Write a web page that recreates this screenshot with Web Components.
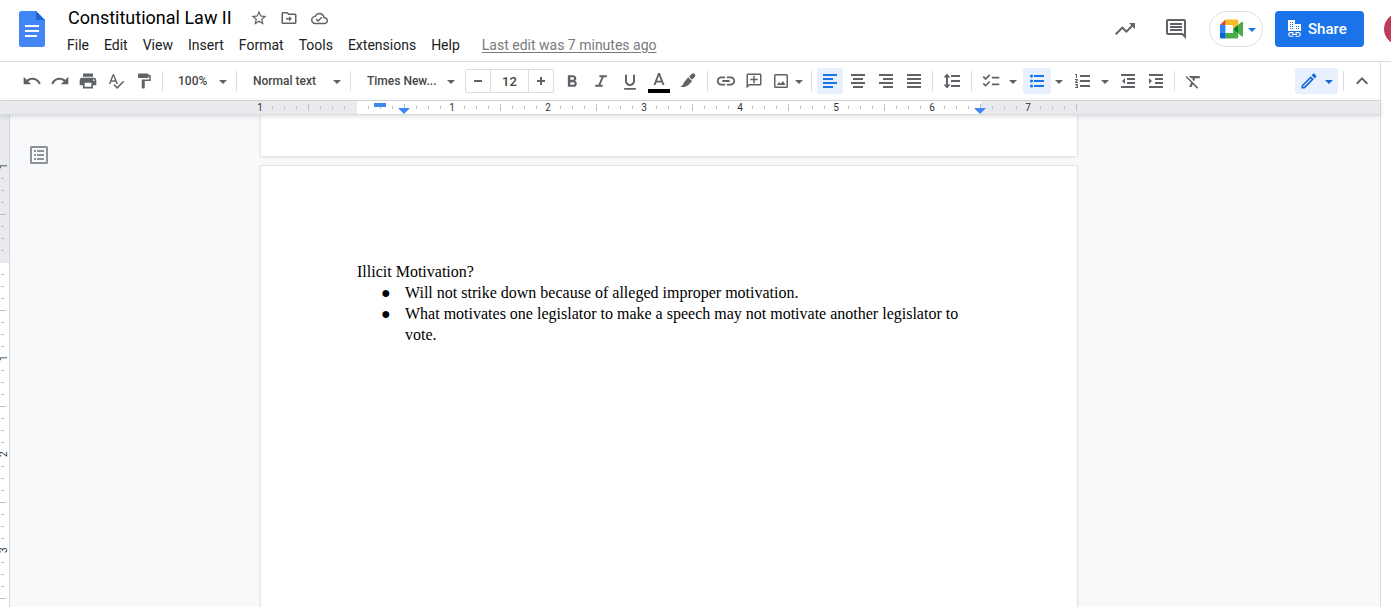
<!DOCTYPE html>
<html lang="en">
<head>
<meta charset="utf-8">
<title>Constitutional Law II</title>
<style>
html, body { margin: 0; height: 100%; }
body { font-family: Roboto, "Liberation Sans", sans-serif; font-size: 14px; color: #202124; background: #fff; overflow: hidden; }
</style>
</head>
<body>
<docs-app></docs-app>

<template id="app">
  <style>
    :host { display: flex; flex-direction: column; height: 100vh; overflow: hidden; }
    .body { flex: 1; min-height: 0; display: flex; }
    .main { flex: 1; min-width: 0; display: flex; flex-direction: column; border-right: 1px solid #dadce0; }
    .side { width: 10px; flex: none; }
    .stage { flex: 1; min-height: 0; display: flex; }
    h1, p, ul { margin: 0; font: inherit; }
    ul { list-style: none; padding: 0 0 0 24px; }
    li { display: grid; grid-template-columns: 24px 1fr; }
  </style>
  <docs-header></docs-header>
  <div class="body">
    <div class="main">
      <docs-toolbar></docs-toolbar>
      <docs-ruler></docs-ruler>
      <div class="stage">
        <docs-side-ruler></docs-side-ruler>
        <docs-canvas>
          <docs-page class="previous"></docs-page>
          <docs-page>
            <p>Illicit Motivation?</p>
            <ul>
              <li><span>●</span><span>Will not strike down because of alleged improper motivation.</span></li>
              <li><span>●</span><span>What motivates one legislator to make a speech may not motivate another legislator to vote.</span></li>
            </ul>
          </docs-page>
        </docs-canvas>
      </div>
    </div>
    <div class="side"></div>
  </div>
</template>

<template id="header">
  <style>
    :host { display: flex; align-items: center; height: 61px; border-bottom: 1px solid #dadce0; overflow: hidden; color: #5f6368; }
    .logo { display: block; width: 26px; height: 36px; margin: 0 15px 4px 19px; }
    .titles { flex: 1; display: flex; flex-direction: column; height: 61px; }
    .row { display: flex; align-items: center; }
    .name { height: 36px; }
    input { font: 400 18px/24px Roboto, sans-serif; color: #000; border: 0; padding: 0; margin: 0 6px 0 8px; width: 170px; outline: 0; background: none; }
    .name tool-button { --w: 30px; --h: 24px; }
    nav { height: 18px; gap: 15px; padding-left: 7px; color: #202124; }
    nav button { font: inherit; color: inherit; background: none; border: 0; padding: 0; }
    nav a { color: #777a7e; margin-left: 7px; text-underline-offset: 2px; }
    .actions { display: flex; align-items: center; height: 36px; margin-bottom: 4px; }
    .actions tool-button { --w: 51px; --h: 36px; }
    .meet { width: 54px; height: 36px; border: 1px solid #dadce0; border-radius: 18px; background: #fff; padding: 0 5px 0 10px; display: flex; align-items: center; gap: 4px; margin: 0 12px 0 8px; color: #1a73e8; }
    .share { width: 89px; height: 36px; border: 0; border-radius: 4px; background: #1a73e8; color: #fff; font: 500 15px Roboto, sans-serif; padding: 0 0 0 13px; display: flex; align-items: center; gap: 3px; }
    .avatar { width: 32px; height: 32px; border: 0; border-radius: 50%; background: #c2395d; margin: 0 -25px 0 20px; flex: none; }
  </style>
  <svg class="logo" viewBox="0 0 26 36" aria-label="Docs home" role="img">
    <path fill="#4285f4" d="M2.500 0H17l9 9v24.500a2.500 2.500 0 0 1-2.500 2.500h-21A2.500 2.500 0 0 1 0 33.500v-31A2.500 2.500 0 0 1 2.500 0z"/>
    <path fill="#1967d2" d="M17 0l9 9h-9z"/>
    <path fill="#fff" d="M6 14h14v2H6zm0 5h14v2H6zm0 5h12v2H6z"/>
  </svg>
  <div class="titles">
    <div class="row name">
      <input aria-label="Document title" value="Constitutional Law II">
      <tool-button icon="star" size="18" label="Star"></tool-button>
      <tool-button icon="move" size="18" label="Move"></tool-button>
      <tool-button icon="cloud" size="17" label="See document status"></tool-button>
    </div>
    <nav class="row">
      <button>File</button><button>Edit</button><button>View</button><button>Insert</button><button>Format</button><button>Tools</button><button>Extensions</button><button>Help</button>
      <a href="#history">Last edit was 7 minutes ago</a>
    </nav>
  </div>
  <div class="actions">
    <tool-button icon="trend" size="24" label="Activity dashboard"></tool-button>
    <tool-button icon="comment" size="24" label="Open comment history"></tool-button>
    <button class="meet" aria-label="Join a call">
      <svg width="24" height="20" viewBox="0 0 87.5 72"><path fill="#00832d" d="M49.500 36l8.530 9.750 11.470 7.330 2-17.020-2-16.640-11.690 6.440z"/><path fill="#0066da" d="M0 51.500V66c0 3.315 2.685 6 6 6h14.500l3-10.960-3-9.540-9.950-3z"/><path fill="#e94235" d="M20.500 0L0 20.500l10.550 3 9.950-3 2.950-9.410z"/><path fill="#2684fc" d="M20.500 20.500H0v31h20.500z"/><path fill="#4bac47" d="M82.600 8.680L69.500 19.420v33.660l13.160 10.790c1.970 1.540 4.850.135 4.850-2.370V11c0-2.535-2.945-3.925-4.910-2.320zM49.500 36v15.500h-29V72h43c3.315 0 6-2.685 6-6V53.080z"/><path fill="#fbb92c" d="M63.500 0h-43v20.500h29V36l20-16.570V6c0-3.315-2.685-6-6-6z"/></svg>
      <ui-icon name="arrow" size="10"></ui-icon>
    </button>
    <button class="share"><ui-icon name="domain" size="17"></ui-icon>Share</button>
    <button class="avatar" aria-label="Account"></button>
  </div>
</template>

<template id="toolbar">
  <style>
    :host { display: flex; align-items: center; height: 38px; padding: 0 4px 0 18px; border-bottom: 1px solid #dadce0; color: #5f6368; }
    .sep { width: 1px; height: 20px; margin: 0 4px; background: #dadce0; flex: none; }
    .grow { flex: 1; }
    .zoom { --w: 65px; --pad: 11px; }
    .menu { --w: 105px; }
    .wide { --w: 30px; }
    .text { --w: 29px; }
    .drop { --w: 14px; margin-right: 2px; }
    .image { --w: 25px; }
    .imgdrop { --w: 12px; margin-right: 2px; }
    .on { --bg: #e8f0fe; color: #1a73e8; }
    .mode { --w: 45px; color: #1967d2; }
    .size { display: flex; width: 87px; height: 22px; border: 1px solid #dadce0; border-radius: 2px; margin: 0 3px 0 5px; flex: none; }
    .size button { width: 24px; padding: 0; border: 0; background: none; color: inherit; display: grid; place-items: center; }
    .size input { flex: 1; min-width: 0; border: solid #dadce0; border-width: 0 1px; padding: 0; text-align: center; font: 500 13px Roboto, sans-serif; color: #444746; }
    .gap { width: 1px; }
  </style>
  <tool-button icon="undo" size="20" label="Undo"></tool-button>
  <tool-button icon="redo" size="20" label="Redo"></tool-button>
  <tool-button icon="print" size="20" label="Print"></tool-button>
  <tool-button icon="spell" size="18" label="Spelling and grammar check"></tool-button>
  <tool-button icon="paint" size="18" label="Paint format"></tool-button>
  <span class="sep"></span>
  <tool-select class="zoom" label="Zoom" value="100%"></tool-select>
  <span class="sep"></span>
  <tool-select class="menu" label="Styles" value="Normal text"></tool-select>
  <span class="sep"></span>
  <tool-select class="menu" label="Font" value="Times New..."></tool-select>
  <div class="size">
    <button aria-label="Decrease font size"><ui-icon name="minus" size="12"></ui-icon></button>
    <input aria-label="Font size" value="12">
    <button aria-label="Increase font size"><ui-icon name="plus" size="12"></ui-icon></button>
  </div>
  <tool-button class="text" icon="bold" size="20" label="Bold"></tool-button>
  <tool-button class="text" icon="italic" size="20" label="Italic"></tool-button>
  <tool-button class="text" icon="underline" size="20" label="Underline"></tool-button>
  <tool-button class="text" icon="color" size="26" label="Text color"></tool-button>
  <tool-button class="text" icon="highlight" size="18" label="Highlight color"></tool-button>
  <span class="gap"></span><span class="sep"></span>
  <tool-button icon="link" size="22" label="Insert link"></tool-button>
  <tool-button icon="addcomment" size="18" label="Add comment"></tool-button>
  <tool-button class="image" icon="image" size="18" label="Insert image"></tool-button>
  <tool-button class="imgdrop" icon="arrow" size="10" label="Image options"></tool-button>
  <span class="sep"></span>
  <tool-button class="on" icon="left" size="18" label="Left align"></tool-button>
  <tool-button icon="center" size="18" label="Center align"></tool-button>
  <tool-button icon="right" size="18" label="Right align"></tool-button>
  <tool-button icon="justify" size="18" label="Justify"></tool-button>
  <span class="sep"></span>
  <tool-button class="wide" icon="spacing" size="20" label="Line spacing"></tool-button>
  <span class="sep"></span>
  <tool-button class="wide" icon="check" size="20" label="Checklist"></tool-button>
  <tool-button class="drop" icon="arrow" size="10" label="Checklist menu"></tool-button>
  <tool-button class="wide on" icon="bullets" size="18" label="Bulleted list"></tool-button>
  <tool-button class="drop" icon="arrow" size="10" label="Bulleted list menu"></tool-button>
  <tool-button class="wide" icon="numbers" size="18" label="Numbered list"></tool-button>
  <tool-button class="drop" icon="arrow" size="10" label="Numbered list menu"></tool-button>
  <tool-button icon="outdent" size="18" label="Decrease indent"></tool-button>
  <tool-button icon="indent" size="18" label="Increase indent"></tool-button>
  <span class="sep"></span>
  <tool-button icon="clear" size="19" label="Clear formatting"></tool-button>
  <span class="grow"></span>
  <tool-button class="mode on" icon="pencil" size="20" label="Editing mode" menu></tool-button>
  <span class="sep"></span>
  <tool-button icon="up" size="24" label="Hide the menus"></tool-button>
</template>

<template id="select">
  <style>
    :host { display: block; width: var(--w); flex: none; }
    label { display: grid; align-items: center; }
    select, ui-icon { grid-area: 1 / 1; }
    select { appearance: none; width: 100%; height: 26px; border: 0; background: none; padding: 0 16px 0 var(--pad, 12px); font: 500 12px Roboto, sans-serif; color: #444746; }
    ui-icon { justify-self: end; margin-right: 4px; pointer-events: none; }
  </style>
  <label><select><option></option></select><ui-icon name="arrow" size="10"></ui-icon></label>
</template>

<template id="button">
  <style>
    :host { display: block; flex: none; width: var(--w, 28px); }
    button { display: flex; align-items: center; justify-content: center; gap: 5px; width: calc(100% - 2px); height: var(--h, 26px); margin: 0 1px; padding: 0; border: 0; border-radius: 2px; background: var(--bg, none); color: inherit; }
  </style>
  <button><ui-icon></ui-icon></button>
</template>

<template id="ruler">
  <style>
    :host { display: block; height: 13px; background: #e8eaed; border-bottom: 1px solid #dadce0; padding: 0 52px 0 10px; position: relative; z-index: 2; box-shadow: 0 1px 5px rgba(60,64,67,.2); }
    .scale { width: 816px; margin: 0 auto; height: 13px; position: relative; background: linear-gradient(90deg, transparent 96px, #fff 96px 720px, transparent 720px); }
    .ticks { display: flex; height: 13px; align-items: center; margin-left: -7px; }
    .ticks i { width: 12px; flex: none; height: 3px; background: linear-gradient(#bdc1c6, #bdc1c6) 6px 0 / 1px 100% no-repeat; }
    .ticks i.half { height: 7px; }
    .ticks i.none { background: none; }
    .ticks b { width: 12px; flex: none; font: 400 10px/13px Roboto, sans-serif; color: #333; text-align: center; }
    .first, .indent { position: absolute; background: #4285f4; }
    .first { left: 113px; top: 2px; width: 12px; height: 4px; }
    .indent { left: 137px; top: 7px; width: 12px; height: 6px; clip-path: polygon(0 0, 100% 0, 50% 100%); }
    .end { left: 713px; }
  </style>
  <div class="scale"><div class="ticks"></div><span class="first"></span><span class="indent"></span><span class="indent end"></span></div>
</template>

<template id="sideruler">
  <style>
    :host { display: block; flex: none; width: 9px; border-right: 1px solid #d5d7da; background: linear-gradient(#e8eaed 148px, #fff 148px); overflow: hidden; }
    .ticks { padding-top: 45px; }
    i { display: block; height: 12px; width: 3px; margin-left: 1px; background: linear-gradient(#bdc1c6, #bdc1c6) 0 6px / 100% 1px no-repeat; }
    i.half { width: 6px; margin-left: 0; }
    i.none { background: none; }
    b { display: block; width: 8px; height: 12px; font: 400 10px/8px Roboto, sans-serif; color: #333; writing-mode: vertical-rl; text-align: center; transform: rotate(180deg); }
  </style>
  <div class="ticks"></div>
</template>

<template id="canvas">
  <style>
    :host { display: flex; flex: 1; min-width: 0; background: #f8f9fa; position: relative; overflow: hidden; }
    .outline { position: absolute; left: 15px; top: 26px; --w: 28px; --h: 28px; color: #8f9298; }
    .pages { flex: 1; display: flex; flex-direction: column; align-items: center; gap: 10px; padding-right: 52px; }
  </style>
  <tool-button class="outline" icon="outline" size="18" label="Show document outline"></tool-button>
  <div class="pages"><slot></slot></div>
</template>

<template id="page">
  <style>
    :host { display: block; flex: none; box-sizing: border-box; width: 816px; height: 1056px; padding: 95px 96px; background: #fff; box-shadow: 0 0 0 1px #e3e5e8, 0 1px 3px rgba(60,64,67,.15); font: 16px/21px "Liberation Serif", serif; color: #000; }
    :host(.previous) { height: 41px; padding: 0; }
  </style>
  <slot></slot>
</template>

<script>
const ICONS = {
  undo: '<path d="M12.500 8c-2.650 0-5.050.990-6.900 2.600L2 7v9h9l-3.620-3.620c1.390-1.160 3.160-1.880 5.120-1.880 3.540 0 6.550 2.310 7.600 5.500l2.370-.780C21.080 11.030 17.150 8 12.500 8z"/>',
  redo: '<path d="M18.400 10.600C16.550 8.990 14.150 8 11.500 8c-4.650 0-8.580 3.030-9.960 7.220L3.900 16c1.050-3.190 4.050-5.500 7.600-5.500 1.950 0 3.730.720 5.120 1.880L13 16h9V7l-3.600 3.600z"/>',
  print: '<path d="M19 8H5c-1.660 0-3 1.340-3 3v6h4v4h12v-4h4v-6c0-1.660-1.340-3-3-3zm-3 11H8v-5h8v5zm3-7c-.550 0-1-.450-1-1s.450-1 1-1 1 .450 1 1-.450 1-1 1zm-1-9H6v4h12V3z"/>',
  spell: '<path d="M12.450 16h2.090L9.430 3H7.570L2.460 16h2.090l1.120-3h5.640l1.140 3zm-6.020-5L8.500 5.480 10.570 11H6.430zm15.160.590l-8.090 8.090L9.830 16l-1.410 1.410 5.090 5.090L23 13l-1.410-1.410z"/>',
  paint: '<path d="M18 4V3c0-.550-.450-1-1-1H5c-.550 0-1 .450-1 1v4c0 .550.450 1 1 1h12c.550 0 1-.450 1-1V6h1v4H9v11c0 .550.450 1 1 1h2c.550 0 1-.450 1-1v-9h8V4h-3z"/>',
  bold: '<path d="M15.600 11.790c.970-.670 1.650-1.770 1.650-2.790 0-2.260-1.750-4-4-4H7v14h7.040c2.090 0 3.710-1.700 3.710-3.790 0-1.520-.860-2.820-2.150-3.420zM10 7.500h3c.830 0 1.500.670 1.500 1.500s-.670 1.500-1.500 1.500h-3v-3zm3.500 9H10v-3h3.500c.830 0 1.500.670 1.500 1.500s-.670 1.500-1.500 1.500z"/>',
  italic: '<path d="M10 5v2.500h2.700l-3.800 9H5V19h9v-2.500h-2.600l3.800-9H19V5z"/>',
  underline: '<path d="M12 18c3.310 0 6-2.690 6-6V4.500h-2.400V12c0 1.930-1.670 3.600-3.600 3.600S8.400 13.930 8.400 12V4.500H6V12c0 3.310 2.690 6 6 6zM5 20.500v2h14v-2H5z"/>',
  color: ['0 0 26 26', '<path d="M12.100 5L7.500 17h2l1-2.600h5l1 2.600h2L13.900 5zm-.900 7.700L13 7.700l1.800 5z"/><path fill="#000" d="M2 21h22v4H2z"/>'],
  highlight: ['0 0 18 18', '<path d="M10.600 3.900L13 1.700q1.400-1 2.700.300t.300 2.700l-2.200 2.400q-.800.500-1.600-.200l-1.600-1.600q-.500-.700 0-1.400z"/><path d="M9.200 5.300l3.500 3.500q.300.500 0 .900l-3.800 3.800q-.700.500-1.400.300l-1.500 1.200H1.500l3-3q-.300-.900.400-1.600z"/>'],
  link: '<path d="M3.900 12c0-1.710 1.390-3.100 3.100-3.100h4V7H7c-2.760 0-5 2.240-5 5s2.240 5 5 5h4v-1.900H7c-1.710 0-3.100-1.390-3.100-3.100zM8 13h8v-2H8v2zm9-6h-4v1.900h4c1.710 0 3.100 1.390 3.100 3.100s-1.390 3.100-3.100 3.100h-4V17h4c2.760 0 5-2.240 5-5s-2.240-5-5-5z"/>',
  addcomment: '<path d="M22 4c0-1.100-.900-2-2-2H4c-1.100 0-2 .900-2 2v18l4-4h14c1.100 0 2-.900 2-2V4zm-2 12H5.200L4 17.200V4h16v12zM11 15h2v-4h4V9h-4V5h-2v4H7v2h4z"/>',
  image: ['0 0 18 18', '<path fill-rule="evenodd" d="M3.500 2h11A1.500 1.500 0 0 1 16 3.500v11a1.500 1.500 0 0 1-1.500 1.500h-11A1.500 1.500 0 0 1 2 14.500v-11A1.500 1.500 0 0 1 3.500 2zm0 1.500v11h11v-11z"/><path d="M5 13l2-3 1.500 1.700L11 9l2.500 4z"/>'],
  left: ['0 0 18 18', '<path d="M2 2h14v2H2zm0 4h10v2H2zm0 4h14v2H2zm0 4h10v2H2z"/>'],
  center: ['0 0 18 18', '<path d="M2 2h14v2H2zm2 4h10v2H4zm-2 4h14v2H2zm2 4h10v2H4z"/>'],
  right: ['0 0 18 18', '<path d="M2 2h14v2H2zm4 4h10v2H6zm-4 4h14v2H2zm4 4h10v2H6z"/>'],
  justify: ['0 0 18 18', '<path d="M2 2h14v2H2zm0 4h14v2H2zm0 4h14v2H2zm0 4h14v2H2z"/>'],
  spacing: ['0 0 20 20', '<path d="M5 2.500l3.500 4H6v7h2.500l-3.500 4-3.500-4H4v-7H1.500zM9 4h9v2H9zm0 5h9v2H9zm0 5h9v2H9z"/>'],
  check: '<path d="M22 7h-9v2h9V7zm0 8h-9v2h9v-2zM5.540 11L2 7.460l1.410-1.410 2.120 2.120 4.240-4.240 1.410 1.410L5.540 11zm0 8L2 15.460l1.410-1.410 2.120 2.120 4.240-4.240 1.410 1.410L5.540 19z"/>',
  bullets: ['0 0 18 18', '<circle cx="3.500" cy="4" r="1.600"/><circle cx="3.500" cy="9" r="1.600"/><circle cx="3.500" cy="14" r="1.600"/><path d="M6 3h10v2H6zm0 5h10v2H6zm0 5h10v2H6z"/>'],
  numbers: ['0 0 18 18', '<path d="M6 3h10v2H6zm0 5h10v2H6zm0 5h10v2H6zM1 2h2v4H2V3H1zm0 5h3v1L2.400 10H4v1H1v-1l1.600-2H1zm0 5h3v4H1v-1h2v-.500H2v-1h1V13H1z"/>'],
  outdent: ['0 0 18 18', '<path d="M2 2h14v2H2zm6 4h8v2H8zm0 4h8v2H8zm-6 4h14v2H2zM6 6v6L3 9z"/>'],
  indent: ['0 0 18 18', '<path d="M2 2h14v2H2zm6 4h8v2H8zm0 4h8v2H8zm-6 4h14v2H2zM2 6v6l3-3z"/>'],
  clear: '<path d="M3.270 5L2 6.270l6.970 6.970L6.500 19h3l1.570-3.660L16.730 21 18 19.730 3.550 5.270 3.270 5zM6 5v.180L8.820 8h2.400l-.720 1.680 2.100 2.100L14.210 8H20V5H6z"/>',
  trend: '<path d="M16 6l2.290 2.290-4.880 4.880-4-4L2 16.590 3.410 18l6-6 4 4 6.300-6.290L22 12V6z"/>',
  comment: '<path d="M21.990 4c0-1.100-.890-2-1.990-2H4c-1.100 0-2 .900-2 2v12c0 1.100.900 2 2 2h14l4 4-.010-18zM20 4v13.170L18.830 16H4V4h16zM6 12h12v2H6zm0-3h12v2H6zm0-3h12v2H6z"/>',
  star: '<path d="M22 9.240l-7.190-.620L12 2 9.190 8.630 2 9.240l5.460 4.730L5.820 21 12 17.270 18.180 21l-1.630-7.030L22 9.240zM12 15.400l-3.760 2.270 1-4.280-3.320-2.880 4.380-.380L12 6.100l1.710 4.040 4.380.380-3.320 2.880 1 4.280L12 15.400z"/>',
  move: '<path d="M20 6h-8l-2-2H4c-1.100 0-1.990.900-1.990 2L2 18c0 1.100.900 2 2 2h16c1.100 0 2-.900 2-2V8c0-1.100-.900-2-2-2zm0 12H4V6h5.170l2 2H20v10z"/><path d="M8 12h4V9.500l4 3.500-4 3.500V14H8z"/>',
  cloud: '<path d="M19.350 10.040C18.670 6.590 15.640 4 12 4 9.110 4 6.600 5.640 5.350 8.040 2.340 8.360 0 10.910 0 14c0 3.310 2.690 6 6 6h13c2.760 0 5-2.240 5-5 0-2.640-2.050-4.780-4.650-4.960zM19 18H6c-2.210 0-4-1.790-4-4 0-2.050 1.530-3.760 3.560-3.970l1.070-.110.500-.950C8.080 7.140 9.940 6 12 6c2.620 0 4.880 1.860 5.390 4.430l.300 1.500 1.530.110c1.560.100 2.780 1.410 2.780 2.960 0 1.650-1.350 3-3 3zm-9-3.820l-2.090-2.090L6.500 13.500 10 17l6.010-6.010-1.410-1.410z"/>',
  pencil: '<path d="M14.060 9.020l.920.920L5.920 19H5v-.920l9.060-9.060M17.660 3c-.250 0-.510.100-.700.290l-1.830 1.830 3.750 3.750 1.830-1.830c.390-.390.390-1.020 0-1.410l-2.340-2.340c-.200-.200-.450-.290-.710-.290zm-3.600 3.190L3 17.250V21h3.750L17.810 9.940l-3.750-3.750z"/>',
  up: '<path d="M12 8l-6 6 1.410 1.410L12 10.830l4.590 4.580L18 14z"/>',
  arrow: ['0 0 10 10', '<path d="M1 4h8L5 8z"/>'],
  minus: ['0 0 12 12', '<path d="M2 5h8v2H2z"/>'],
  plus: ['0 0 12 12', '<path d="M2 5h8v2H2z"/><path d="M5 2h2v8H5z"/>'],
  outline: ['0 0 18 18', '<path fill-rule="evenodd" d="M1.500 0h15A1.500 1.500 0 0 1 18 1.500v15a1.500 1.500 0 0 1-1.500 1.500h-15A1.500 1.500 0 0 1 0 16.500v-15A1.500 1.500 0 0 1 1.500 0zM2 2v14h14V2z"/><path d="M4 4h2v2H4zm3 0h7v2H7zM4 8h2v2H4zm3 0h7v2H7zm-3 4h2v2H4zm3 0h7v2H7z"/>'],
  domain: ['0 0 17 17', '<path fill-rule="evenodd" d="M0 0h7v4h6v7H0zM2 2v1h1V2zm2 0v1h1V2zM2 4v1h1V4zm2 0v1h1V4zM2 6v1h1V6zm2 0v1h1V6zM2 8v1h1V8zm2 0v1h1V8zm4-2v1h1V6zm2 0v1h1V6zM8 8v1h1V8zm2 0v1h1V8z"/><path fill="none" stroke="currentColor" stroke-width="1.100" d="M5.500 12.600H2.500a1.800 1.800 0 0 0 0 3.600H5.500M7.500 12.600h3a1.800 1.800 0 0 1 0 3.600h-3M4 14.400h5"/>']
};

class Templated extends HTMLElement {
  constructor() {
    super();
    const root = this.attachShadow({ mode: 'open' });
    root.append(document.getElementById(this.constructor.template).content.cloneNode(true));
  }
}

class UiIcon extends HTMLElement {
  static observedAttributes = ['name', 'size'];
  constructor() { super(); this.attachShadow({ mode: 'open' }); }
  attributeChangedCallback() {
    const icon = ICONS[this.getAttribute('name')];
    if (!icon) return;
    const size = this.getAttribute('size') || 18;
    const [box, art] = Array.isArray(icon) ? icon : ['0 0 24 24', icon];
    this.shadowRoot.innerHTML = `<style>:host{display:block;flex:none}svg{display:block;fill:currentColor}</style>
      <svg width="${size}" height="${size}" viewBox="${box}" aria-hidden="true">${art}</svg>`;
  }
}

class ToolButton extends Templated {
  static template = 'button';
  connectedCallback() {
    const button = this.shadowRoot.querySelector('button');
    const icon = button.querySelector('ui-icon');
    button.setAttribute('aria-label', this.getAttribute('label'));
    icon.setAttribute('size', this.getAttribute('size'));
    icon.setAttribute('name', this.getAttribute('icon'));
    if (this.hasAttribute('menu')) {
      const arrow = document.createElement('ui-icon');
      arrow.setAttribute('name', 'arrow');
      arrow.setAttribute('size', '10');
      button.append(arrow);
    }
  }
}

class ToolSelect extends Templated {
  static template = 'select';
  connectedCallback() {
    this.shadowRoot.querySelector('select').setAttribute('aria-label', this.getAttribute('label'));
    this.shadowRoot.querySelector('option').textContent = this.getAttribute('value');
  }
}

// One cell per eighth of an inch; whole inches carry their number.
function fillTicks(box, count) {
  for (let k = 0; k < count; k++) {
    const inch = Math.abs(k / 8 - 1);
    const labelled = k % 8 === 0 && inch > 0;
    const cell = document.createElement(labelled ? 'b' : 'i');
    if (labelled) cell.textContent = inch;
    else if (k % 8 === 0) cell.className = 'none';
    else if (k % 8 === 4) cell.className = 'half';
    box.append(cell);
  }
}

class DocsRuler extends Templated {
  static template = 'ruler';
  connectedCallback() { fillTicks(this.shadowRoot.querySelector('.ticks'), 69); }
}
class DocsSideRuler extends Templated {
  static template = 'sideruler';
  connectedCallback() {
    const room = Math.max(0, this.clientHeight - 45);
    fillTicks(this.shadowRoot.querySelector('.ticks'), Math.min(88, Math.ceil(room / 12)));
  }
}
class DocsPage extends Templated { static template = 'page'; }
class DocsCanvas extends Templated { static template = 'canvas'; }
class DocsHeader extends Templated { static template = 'header'; }
class DocsToolbar extends Templated { static template = 'toolbar'; }
class DocsApp extends Templated { static template = 'app'; }

customElements.define('ui-icon', UiIcon);
customElements.define('tool-button', ToolButton);
customElements.define('tool-select', ToolSelect);
customElements.define('docs-header', DocsHeader);
customElements.define('docs-toolbar', DocsToolbar);
customElements.define('docs-page', DocsPage);
customElements.define('docs-canvas', DocsCanvas);
customElements.define('docs-ruler', DocsRuler);
customElements.define('docs-app', DocsApp);
customElements.define('docs-side-ruler', DocsSideRuler);
</script>
</body>
</html>
